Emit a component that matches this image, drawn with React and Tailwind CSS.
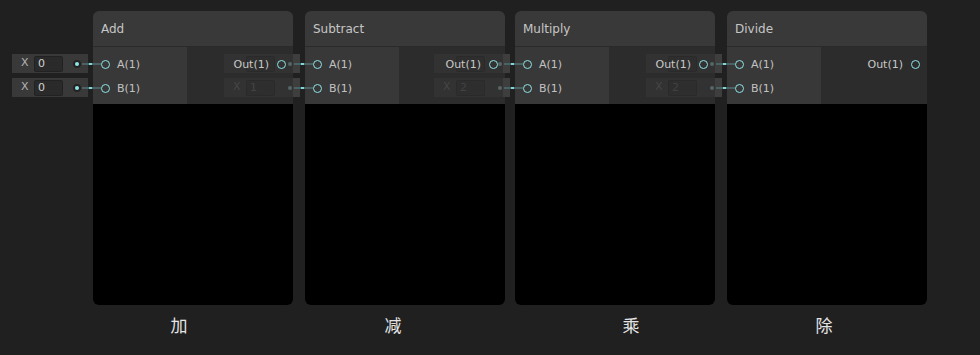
import React from 'react';

const nodes = [
    { title: 'Add', label: '加', gap: '', labelPad: 'pr-[28px]', values: ['0', '0'], first: true },
    { title: 'Subtract', label: '减', gap: 'ml-[12px]', labelPad: 'pr-[24px]', values: ['', '1'] },
    { title: 'Multiply', label: '乘', gap: 'ml-[10px]', labelPad: 'pl-[32px]', values: ['', '2'] },
    { title: 'Divide', label: '除', gap: 'ml-[12px]', labelPad: 'pr-[6px]', values: ['', '2'] },
];

const Port = () => (
    <span className="block w-[9px] h-[9px] rounded-full border-[1.5px] border-[#8de3e6] shrink-0" />
);

// default value field sitting left of an input port
const ValueField = ({ value, first }) => {
    if (first) {
        return (
            <div className="absolute left-[-81px] top-[2px] w-[76px] h-[19px] bg-[#393939] flex items-center">
                <span className="ml-[9px] w-[12px] text-[11px] text-[#b4b4b4]">X</span>
                <span className="ml-[1px] w-[29px] h-[16px] rounded-[2px] bg-[#2a2a2a] border border-[#222] text-[11px] leading-[14px] pl-[3px] text-[#d2d2d2]">
                    {value}
                </span>
                <span className="ml-[10px] w-[8px] h-[8px] rounded-full bg-[#232323] flex items-center justify-center">
                    <span className="block w-[4px] h-[4px] rounded-full bg-[#8de3e6]" />
                </span>
            </div>
        );
    }
    // connected: field fades out behind the previous node
    return (
        <>
            <div className="absolute left-[-81px] top-[2px] w-[69px] h-[19px] bg-[#ffffff08] flex items-center">
                <span className="ml-[9px] w-[12px] text-[11px] text-[#ffffff1c]">{value ? 'X' : ''}</span>
                <span className="ml-[1px] w-[29px] h-[16px] rounded-[2px] bg-[#00000010] border border-[#0000001a] text-[11px] leading-[14px] pl-[3px] text-[#ffffff1c]">
                    {value}
                </span>
                <span className="ml-[13px] w-[4px] h-[4px] rounded-full bg-[#566565]" />
            </div>
            <div className="absolute left-[-12px] top-[2px] w-[7px] h-[19px] bg-[#3e3e3e]" />
        </>
    );
};

const InputRow = ({ name, value, first }) => (
    <div className="relative h-[24px] flex items-center pl-[8px]">
        <ValueField value={value} first={first} />
        <span className="absolute left-[-11px] top-[11px] w-[19px] h-[2px] bg-[#4a6262]" />
        <span className="absolute left-[-4px] top-[11px] w-[3px] h-[2px] bg-[#7fd6d8]" />
        <Port />
        <span className="ml-[7px] mt-[2px] text-[11px] text-[#c2c2c2]">{name}</span>
    </div>
);

const Node = ({ node }) => (
    <div className={`relative w-[200px] h-[294px] flex flex-col ${node.gap}`}>
        <div className="h-[36px] rounded-t-[6px] bg-[#393939] border-b border-[#2a2a2a] flex items-center px-[8px] pt-[1px] text-[12px] text-[#c6c6c6]">
            {node.title}
        </div>
        <div className="h-[57px] flex">
            <div className="w-[94px] bg-[#383838] pt-[5px]">
                <InputRow name="A(1)" value={node.values[0]} first={node.first} />
                <InputRow name="B(1)" value={node.values[1]} first={node.first} />
            </div>
            <div className="flex-1 bg-[#2c2c2c] pt-[5px]">
                <div className="relative z-10 h-[24px] flex items-center justify-end pr-[7px]">
                    <span className="text-[11px] mt-[2px] text-[#c8c8c8] mr-[8px]">Out(1)</span>
                    <Port />
                </div>
            </div>
        </div>
        <div className="flex-1 bg-black rounded-b-[6px]" />
    </div>
);

const App = () => {
    return (
        <div className="w-[980px] h-[355px] bg-[#202020] pt-[11px] pl-[93px] overflow-hidden font-['DejaVu_Sans',sans-serif]">
            <div className="flex">
                {nodes.map((n) => (
                    <Node key={n.title} node={n} />
                ))}
            </div>
            <div className="flex mt-[10px]">
                {nodes.map((n) => (
                    <div
                        key={n.title}
                        className={`w-[200px] text-center text-[17px] leading-[20px] text-[#e4e4e4] font-['Noto_Sans_CJK_SC',sans-serif] ${n.gap} ${n.labelPad}`}
                    >
                        {n.label}
                    </div>
                ))}
            </div>
        </div>
    );
};

export default App;
